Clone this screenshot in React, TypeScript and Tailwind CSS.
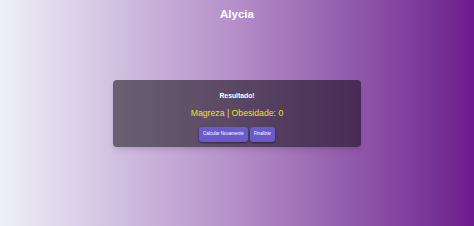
export default function App() {
  return (
    <div className="flex h-[226px] w-full flex-col items-center justify-between bg-gradient-to-r from-[#eef1f8] via-[#b48ec8] to-[#6c1a8c] font-['Liberation_Sans',Arial,sans-serif]">
      <header className="flex h-[28px] items-start justify-center pt-[7px]">
        <h1 className="text-[11.5px] font-bold leading-[14px] text-white">Alycia</h1>
      </header>

      <div className="flex h-[67px] w-[248px] flex-col items-center rounded-[4px] bg-black/50 pt-[12px] shadow-md">
        <h2 className="text-[6.8px] font-bold leading-[8px] text-white">Resultado!</h2>
        <p className="mt-[8px] text-[8.7px] leading-[10px] text-[#eee022]">Magreza | Obesidade: 0</p>
        <div className="mt-[9px] flex gap-[2px]">
          <button className="h-[15px] rounded-[3px] bg-[#6a5acd] px-[4px] text-[4.5px] text-white shadow-[0_1px_2px_rgba(0,0,0,0.5)]">
            Calcular Novamente
          </button>
          <button className="h-[15px] rounded-[3px] bg-[#6a5acd] px-[4px] text-[4.5px] text-white shadow-[0_1px_2px_rgba(0,0,0,0.5)]">
            Finalizar
          </button>
        </div>
      </div>

      <div className="h-[28px]" />
    </div>
  );
}
